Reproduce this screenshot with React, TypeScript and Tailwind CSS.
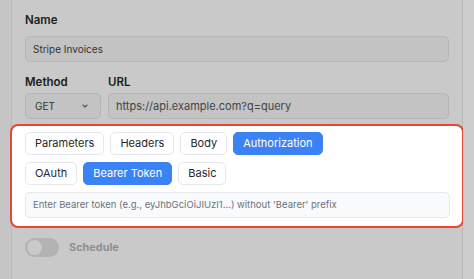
import React from "react";

function Tab({ label, active }: { label: string; active?: boolean }) {
  return (
    <button
      className={
        active
          ? "h-[23px] px-[9px] rounded-[5px] bg-[#3b82f6] border border-[#3b82f6] text-white text-[11px] leading-none"
          : "h-[23px] px-[9px] rounded-[5px] bg-white border border-[#e5e7eb] text-[#27272a] text-[11px] leading-none"
      }
    >
      {label}
    </button>
  );
}

export default function App() {
  return (
    <div className="w-[474px] h-[279px] flex bg-[#c5c5c5] overflow-hidden" style={{ fontFamily: "Inter, 'Noto Sans', sans-serif" }}>
      <div className="w-[11px] shrink-0" />
      {/* Dimmed form panel */}
      <div className="w-[452px] shrink-0 bg-[#c9c9c9] border-x border-[#b9b9b9] flex flex-col px-[13px] pt-[12px]">
        <label className="text-[11.5px] font-semibold text-[#1c1c1c] leading-[16px]">Name</label>
        <div className="mt-[8px] h-[26px] rounded-[5px] bg-[#c3c3c3] border border-[#b5b5b5] flex items-center px-[7px] text-[10px] text-[#333]">
          Stripe Invoices
        </div>

        <div className="mt-[12px] flex gap-[7px]">
          <div className="w-[76px] flex flex-col">
            <label className="text-[11.5px] font-semibold text-[#1c1c1c] leading-[16px]">Method</label>
            <div className="mt-[3px] h-[26px] rounded-[5px] bg-[#c3c3c3] border border-[#b5b5b5] flex items-center justify-between pl-[9px] pr-[11px] text-[10px] text-[#333]">
              <span>GET</span>
              <svg width="8" height="8" viewBox="0 0 24 24" fill="none" stroke="#555" strokeWidth="3.5" strokeLinecap="round" strokeLinejoin="round">
                <path d="M6 9l6 6 6-6" />
              </svg>
            </div>
          </div>
          <div className="flex-1 flex flex-col">
            <label className="text-[11.5px] font-semibold text-[#1c1c1c] leading-[16px]">URL</label>
            <div className="mt-[3px] h-[26px] rounded-[5px] bg-[#c3c3c3] border border-[#b5b5b5] flex items-center px-[7px] text-[11px] text-[#444]">
              https://api.example.com?q=query
            </div>
          </div>
        </div>

        {/* Highlighted auth section */}
        <div className="mt-[5px] -mx-[15px] rounded-[8px] border-2 border-[#e8472f] bg-white pl-[13px] pr-[12px] pt-[6px] pb-[8px] flex flex-col gap-[7px]">
          <div className="flex gap-[6px]">
            <Tab label="Parameters" />
            <Tab label="Headers" />
            <Tab label="Body" />
            <Tab label="Authorization" active />
          </div>
          <div className="flex gap-[6px]">
            <Tab label="OAuth" />
            <Tab label="Bearer Token" active />
            <Tab label="Basic" />
          </div>
          <div className="h-[26px] rounded-[5px] bg-[#f9fafb] border border-[#e5e7eb] flex items-center px-[7px] text-[9.5px] text-[#6b7280]">
            Enter Bearer token (e.g., eyJhbGciOiJIUzI1...) without 'Bearer' prefix
          </div>
        </div>

        <div className="mt-[10px] flex items-center gap-[10px]">
          <div className="w-[34px] h-[19px] rounded-full bg-[#b3b3b3] flex items-center px-[2px]">
            <div className="w-[15px] h-[15px] rounded-full bg-[#c9c9c9]" />
          </div>
          <span className="text-[11px] font-semibold text-[#8a8a8a]">Schedule</span>
        </div>
      </div>
      <div className="flex-1 bg-[#cdcdcd]" />
    </div>
  );
}
